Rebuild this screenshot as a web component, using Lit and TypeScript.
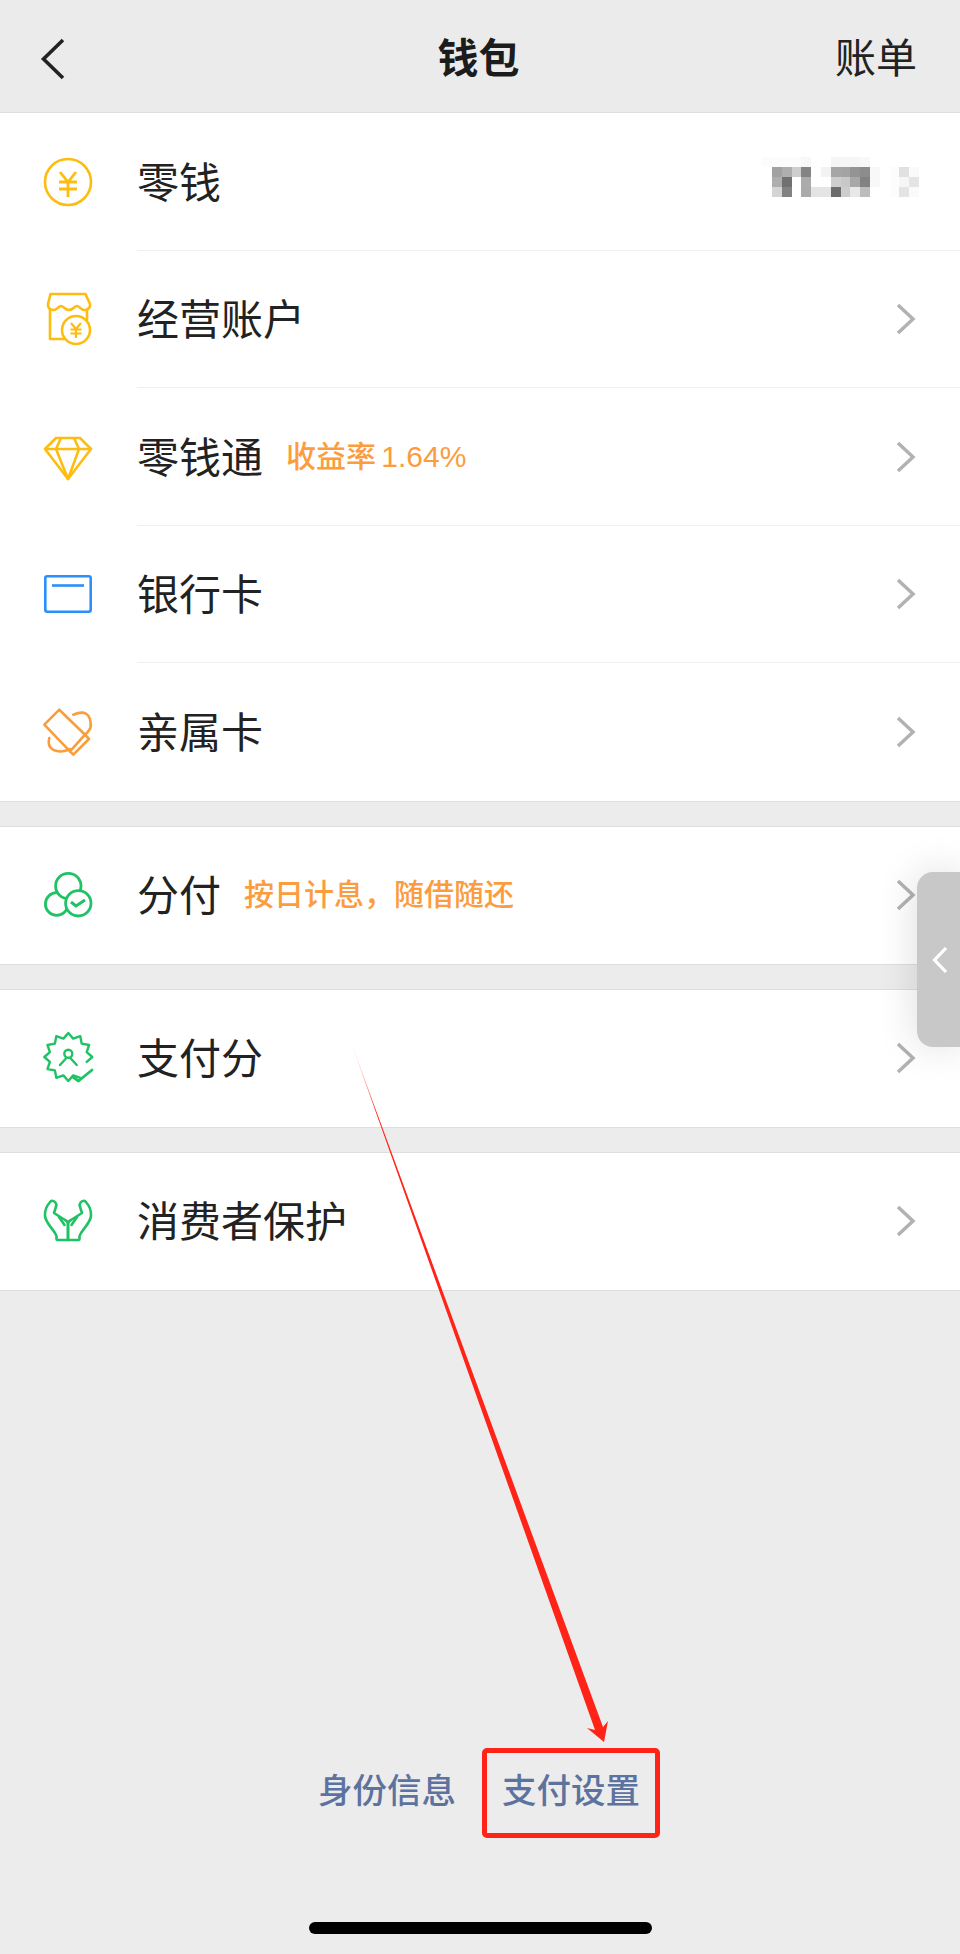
import { LitElement, css, html, svg } from "lit";
import { customElement } from "lit/decorators.js";

const YELLOW = "#fdbd10";
const BLUE = "#2b8ffb";
const ORANGE = "#fa9d3b";
const GREEN = "#1fc265";

// zigzag outline of the badge, open at the lower right where the tick sits
const badgeEdge = () => {
  const pts: string[] = [];
  for (let i = 0; i <= 21; i++) {
    const deg = 15 - i * 15;
    const r = i % 2 ? 24 : 19;
    const rad = (deg * Math.PI) / 180;
    pts.push(`${(24.3 + r * Math.cos(rad)).toFixed(1)} ${(24 + r * Math.sin(rad)).toFixed(1)}`);
  }
  return "M" + pts.join("L");
};

const hand = svg`<path d="M12.500 5C11.500 1 8 0 6.500 1.500 2.500 6 .5 11 1 16c.6 6 6 11 10 17l1.500 3v3q0 1 1 1H24V24c0-2-1-3-3-4L10 13z"/>
  <path d="M15 17l5.500 8"/>`;

// hand drawn in a 48 wide box, painted at 48px
const icons: Record<string, unknown> = {
  coin: svg`<circle cx="24" cy="24" r="23" stroke=${YELLOW} stroke-width="2.600" fill="none"/>
    <path d="M16 14l8 10 8-10M15 24h18M15 31h18M24 24v15" stroke=${YELLOW} stroke-width="2.800" fill="none"/>`,
  shop: svg`<g stroke=${YELLOW} stroke-width="2.600" fill="none" stroke-linejoin="round" stroke-linecap="round">
    <path d="M6.500 1h35l4.500 10v1.500c-.5 3-3 4.500-5.500 4.500-4 0-5-4-7.500-4s-3.500 4-8 4-5.500-4-8-4-3.500 4-7.500 4c-2.500 0-5-1.500-5.500-4.500V11z"/>
    <path d="M6 17v29h14M43 17v10"/>
    <circle cx="32" cy="37" r="14" fill="#fff"/>
    <path d="M27 30l5 6 5-6M26.500 36.500h11M26.500 40.500h11M32 36v9" stroke-width="2.200" stroke-linecap="butt"/></g>`,
  gem: svg`<g stroke=${YELLOW} stroke-width="2.600" fill="none" stroke-linejoin="round">
    <path d="M12 3h24l11 11-23 30L1 14z"/>
    <path d="M1 14h46M17 3l-5 11 12 30 11-30-5-11"/></g>`,
  card: svg`<rect x="1.300" y="1.300" width="45.400" height="35.400" rx="2" stroke=${BLUE} stroke-width="2.600" fill="none"/>
    <path d="M8 10.500h32" stroke=${BLUE} stroke-width="2.600"/>`,
  family: svg`<g stroke=${ORANGE} stroke-width="2.600" fill="none" stroke-linejoin="round" stroke-linecap="round">
    <path d="M15.300.7L.3 15.700 26 42.300 41 25.700z"/>
    <path d="M26 42.300l3.300 3.400L45 30l-4-4.300"/>
    <path d="M29.300 5.700C40 1 47 4 46.700 17.300 46.500 20 44 23 41 25.700"/>
    <path d="M5.300 29C3 38 8 42 16 42.500c3 .2 6-.5 10-2.500"/></g>`,
  split: svg`<g stroke=${GREEN} stroke-width="2.800" fill="#fff">
    <circle cx="12.700" cy="32" r="11.300"/>
    <circle cx="24.300" cy="14" r="12.700"/>
    <circle cx="34.300" cy="31.300" r="12.700"/>
    <path d="M27 30l5 4 9-6" fill="none" stroke-width="3"/></g>`,
  score: svg`<g stroke=${GREEN} stroke-width="2.400" fill="none" stroke-linejoin="round" stroke-linecap="round">
    <path d=${badgeEdge()}/>
    <circle cx="24.300" cy="20.700" r="4"/>
    <path d="M16 32l5.700-6.300M32.700 32L27 25.700"/>
    <path d="M29 44l5.500 4L48 37" stroke-width="2.800"/></g>`,
  hands: svg`<g stroke=${GREEN} stroke-width="2.600" fill="none" stroke-linecap="round" stroke-linejoin="round">
    ${hand}<g transform="matrix(-1 0 0 1 48 0)">${hand}</g></g>`,
};

// mosaic that hides the balance, grey value per tile
const mosaic = [
  [252, 252, 252, 252, 248, 255, 255, 246, 246, 246, 248, 255, 255, 255, 255, 255],
  [255, 162, 174, 206, 132, 255, 243, 166, 164, 148, 140, 248, 255, 252, 225, 250],
  [255, 174, 112, 255, 172, 255, 255, 206, 200, 168, 130, 248, 255, 252, 246, 228],
  [255, 212, 130, 255, 170, 228, 228, 108, 205, 232, 188, 255, 255, 252, 228, 250],
];

interface Row {
  icon: string;
  iconHeight?: number;
  label: string;
  note?: string;
  masked?: boolean;
}

const groups: Row[][] = [
  [
    { icon: "coin", label: "零钱", masked: true },
    { icon: "shop", iconHeight: 52, label: "经营账户" },
    { icon: "gem", iconHeight: 44, label: "零钱通", note: "收益率 1.64%" },
    { icon: "card", iconHeight: 38, label: "银行卡" },
    { icon: "family", iconHeight: 46, label: "亲属卡" },
  ],
  [{ icon: "split", iconHeight: 46, label: "分付", note: "按日计息，随借随还" }],
  [{ icon: "score", iconHeight: 50, label: "支付分" }],
  [{ icon: "hands", iconHeight: 42, label: "消费者保护" }],
];

@customElement("app-root")
export class AppRoot extends LitElement {
  static styles = css`
    :host {
      display: block;
      position: relative;
      width: 960px;
      height: 1954px;
      overflow: hidden;
      background: #ececec;
      font-family: "Liberation Sans", "Noto Sans CJK SC", sans-serif;
      color: #222;
    }
    .nav {
      display: grid;
      grid-template-columns: 1fr auto 1fr;
      align-items: center;
      height: 112px;
      padding: 5px 43px 0 40px;
      box-sizing: border-box;
      background: #ebebeb;
      font-size: 41px;
    }
    .nav svg {
      display: block;
    }
    .nav h1 {
      margin: 0;
      font-size: 41px;
      font-weight: 700;
      line-height: 56px;
      color: #1c1c1c;
    }
    .nav .bill {
      justify-self: end;
      line-height: 56px;
    }
    .group {
      background: #fff;
      border-top: 1px solid #dedede;
      border-bottom: 1px solid #dedede;
      margin-bottom: 24px;
    }
    .row {
      display: flex;
      align-items: center;
      height: 137px;
    }
    .group.tall .row {
      height: 137.500px;
    }
    .icon {
      flex: none;
      display: flex;
      justify-content: center;
      width: 137px;
    }
    .icon svg {
      display: block;
      margin-left: -1px;
      overflow: visible;
    }
    .body {
      flex: 1;
      display: flex;
      align-items: center;
      align-self: stretch;
      padding-right: 42px;
    }
    .row + .row .body {
      box-shadow: 0 -1px 0 #f0f0f0;
    }
    .label {
      font-size: 42px;
      line-height: 56px;
      padding-top: 4px;
    }
    .note {
      margin-left: 23px;
      font-size: 30px;
      line-height: 40px;
      color: #fb9d3e;
      font-weight: 500;
      word-spacing: -3px;
    }
    .end {
      margin-left: auto;
      display: block;
    }
    .mosaic {
      margin-left: auto;
      margin-right: -1px;
      margin-top: -10px;
      display: grid;
      grid-template-columns: repeat(16, 9.800px);
      grid-auto-rows: 10px;
      filter: blur(0.600px);
    }
    .links {
      position: absolute;
      left: 318px;
      top: 1767px;
      display: flex;
      gap: 46px;
      font-size: 34.500px;
      line-height: 48px;
      color: #5c729f;
      font-weight: 500;
    }
    .home {
      position: absolute;
      left: 309px;
      top: 1922px;
      width: 343px;
      height: 12px;
      border-radius: 6px;
      background: #000;
    }
    .handle {
      position: absolute;
      left: 917px;
      top: 872px;
      width: 43px;
      height: 175px;
      display: flex;
      align-items: center;
      padding-left: 15px;
      box-sizing: border-box;
      background: #c8c8c8;
      border-radius: 16px 0 0 16px;
      box-shadow: 0 0 40px rgba(0, 0, 0, 0.14);
    }
    .mark {
      position: absolute;
      left: 482px;
      top: 1748px;
      width: 178px;
      height: 90px;
      box-sizing: border-box;
      border: 5px solid #ff2417;
      border-radius: 5px;
    }
    .arrow {
      position: absolute;
      left: 340px;
      top: 1030px;
    }
  `;

  renderChevron() {
    return html`<svg class="end" width="24" height="34" viewBox="0 0 24 34" fill="none">
      <path d="M4 3l15 14L4 31" stroke="#b2b2b2" stroke-width="3.500"/>
    </svg>`;
  }

  renderMosaic() {
    return html`<div class="mosaic">
      ${mosaic.flat().map((v) => html`<i style="background:rgb(${v},${v},${v})"></i>`)}
    </div>`;
  }

  renderRow(row: Row) {
    const h = row.iconHeight ?? 48;
    return html`<div class="row">
      <div class="icon">
        <svg width="48" height=${h} viewBox="0 0 48 ${h}">${icons[row.icon]}</svg>
      </div>
      <div class="body">
        <span class="label">${row.label}</span>
        ${row.note ? html`<span class="note">${row.note}</span>` : ""}
        ${row.masked ? this.renderMosaic() : this.renderChevron()}
      </div>
    </div>`;
  }

  render() {
    return html`
      <div class="nav">
        <svg width="30" height="44" viewBox="0 0 30 44" fill="none">
          <path d="M23 3L3.500 22 23 41" stroke="#222" stroke-width="3.600"/>
        </svg>
        <h1>钱包</h1>
        <span class="bill">账单</span>
      </div>
      ${groups.map((group) => html`<div class="group ${group.length > 1 ? "tall" : ""}">
        ${group.map((row) => this.renderRow(row))}
      </div>`)}
      <div class="links"><span>身份信息</span><span>支付设置</span></div>
      <div class="home"></div>
      <div class="handle">
        <svg width="16" height="28" viewBox="0 0 16 28" fill="none">
          <path d="M14 2L2.500 14 14 26" stroke="#fff" stroke-width="3.200"/>
        </svg>
      </div>
      <div class="mark"></div>
      <svg class="arrow" width="280" height="720" viewBox="0 0 280 720">
        <defs>
          <linearGradient id="fade" x1="0" y1="0" x2="0" y2="1">
            <stop offset="0" stop-color="#ff2417" stop-opacity="0.25"/>
            <stop offset="0.1" stop-color="#ff2417"/>
          </linearGradient>
        </defs>
        <path d="M12 15L263 697 268 691 264 712 247 698 255 700z" fill="url(#fade)"/>
      </svg>
    `;
  }
}
